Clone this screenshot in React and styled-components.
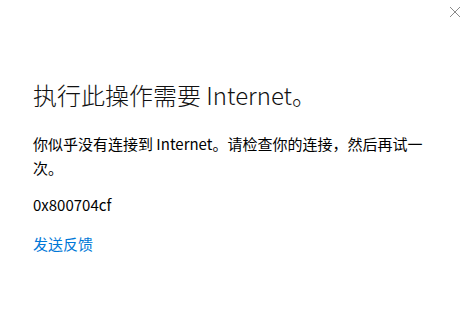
import React from "react";
import styled, { createGlobalStyle } from "styled-components";

const GlobalStyle = createGlobalStyle`
  html, body {
    margin: 0;
    padding: 0;
    background: #fff;
  }
  body {
    font-family: "Noto Sans CJK SC", "Noto Sans", sans-serif;
    color: #000;
  }
`;

const Dialog = styled.div`
  position: relative;
  width: 470px;
  height: 324px;
  box-sizing: border-box;
  padding: 79px 33px 0 33px;
  background: #fff;
`;

const CloseButton = styled.button`
  position: absolute;
  top: 5px;
  right: 8px;
  width: 14px;
  height: 14px;
  padding: 0;
  border: 0;
  background: none;
  cursor: pointer;

  & svg {
    display: block;
  }
`;

const Title = styled.h1`
  margin: 0;
  font-size: 24px;
  line-height: 32px;
  font-weight: 300;
  color: #111;
`;

const Message = styled.p`
  margin: ${(p) => p.$top || 0}px 0 0;
  font-size: 15px;
  line-height: 24px;
  color: #000;
`;

const FeedbackLink = styled.a`
  display: block;
  margin-top: 15px;
  font-size: 15px;
  line-height: 24px;
  color: #0078d7;
  text-decoration: none;
`;

const App = () => {
  return (
    <>
      <GlobalStyle />
      <Dialog>
        <CloseButton aria-label="关闭">
          <svg width="14" height="14" viewBox="0 0 14 14">
            <path d="M2 2 L12 12 M12 2 L2 12" stroke="#8a8a8a" strokeWidth="1" />
          </svg>
        </CloseButton>
        <Title>执行此操作需要 Internet。</Title>
        <Message $top={21}>
          你似乎没有连接到 Internet。请检查你的连接，然后再试一次。
        </Message>
        <Message $top={13}>0x800704cf</Message>
        <FeedbackLink href="#">发送反馈</FeedbackLink>
      </Dialog>
    </>
  );
};

export default App;
